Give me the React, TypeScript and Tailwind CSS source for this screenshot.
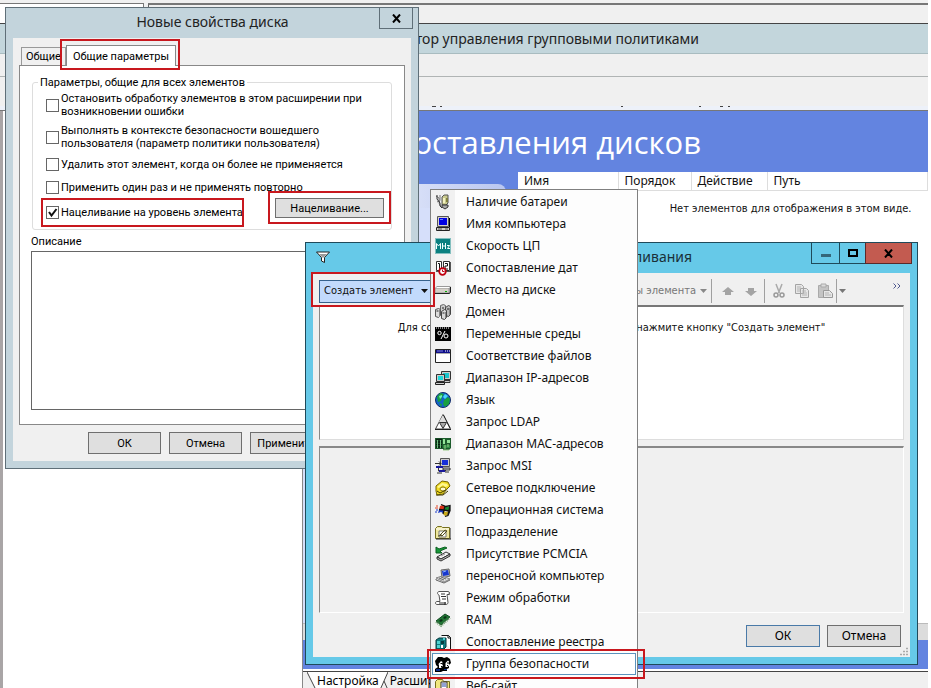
import type { ReactNode } from 'react';

const ui = "font-['Noto_Sans','Open_Sans',sans-serif]";
const compact = "text-[11px] font-['DejaVu_Sans_Condensed','Noto_Sans',sans-serif]";
const tahoma = "font-[Roboto,'Noto_Sans',sans-serif]";

function Icon({ children, size = 16 }: { children: ReactNode; size?: number }) {
  return (
    <svg width={size} height={size} viewBox="0 0 16 16" fill="none" aria-hidden="true" className="shrink-0">
      {children}
    </svg>
  );
}

const Battery = () => (
  <Icon>
    <path d="M1 2l3 2v3L2 8M5 1v5l-1 3 2 4" stroke="#777" />
    <path d="M2 1v4l3 4v3l2 2" stroke="#333" />
    <path d="M7 3l2-2h4v8l-2 2H7z" fill="#c9c98d" stroke="#555" />
    <path d="M8 4h2v5H8z" fill="#f4f4c0" />
    <path d="M7 11h6v2l-3 2-3-2z" fill="#aaa" stroke="#333" />
    <path d="M11 4h2v4h-2z" fill="#808040" />
  </Icon>
);
const Computer = () => (
  <Icon>
    <path d="M2.500 .5h11v10h-11z" fill="#d4d0c8" stroke="#555" />
    <path d="M4 2h8v7H4z" fill="#0000e0" />
    <path d="M5 3h3v1H5z" fill="#6080ff" />
    <path d="M1.500 11.500h13v3h-13z" fill="#d4d0c8" stroke="#222" />
    <path d="M3 13h4M10 13h3" stroke="#555" />
    <path d="M14.500 2v9" stroke="#000" />
  </Icon>
);
const Mhz = () => (
  <Icon>
    <rect width="16" height="16" fill="#0b8080" />
    <rect x=".5" y=".5" width="15" height="15" stroke="#fff" strokeDasharray="1 1" />
    <path d="M1.500 11V5.500l2 2.500 2-2.500V11M7.500 5v6M10.500 5v6M7.500 8h3M12 7.500h2.500l-2 3h2.500" stroke="#f4ffff" />
  </Icon>
);
const Dates = () => (
  <Icon>
    <path d="M1.500 1.500h5v9h-5zM8.500 1.500h6v9h-6z" fill="#fff" stroke="#333" />
    <path d="M3 3.500h1.500V9M10 3.500h2.500v2.500h-2.500v3h3" stroke="#111" />
    <path d="M1 11.500h14M15.500 2v10" stroke="#555" />
    <circle cx="7.500" cy="11.500" r="3.300" fill="#fff" stroke="#c00010" strokeWidth="1.800" />
    <path d="M7.500 9.500v2h2M4 8l2 1M11 8l-2 1" stroke="#c00010" />
  </Icon>
);
const Disk = () => (
  <Icon>
    <path d="M0 6l2-2h13l1 1v5l-2 2H1l-1-1z" fill="#999" />
    <path d="M1 6l1-1h13l-1 1z" fill="#fff" />
    <path d="M.5 6.500h13v4H.5z" fill="#d4d0c8" />
    <path d="M0 11.500h14.500l1-1.500V5" stroke="#222" />
    <path d="M10 9h2v1h-2z" fill="#0a0" />
  </Icon>
);
const Domain = () => (
  <Icon>
    <path d="M5.500 1.500l3-1 2 1v7l-3 1-2-1z" fill="#ccc" stroke="#666" />
    <path d="M10.500 3.500l3-2 2 1v8l-2 2-3-1z" fill="#bbb" stroke="#444" />
    <path d="M.5 5.500l3-1 2 1v6l-2 2-3-1z" fill="#ddd" stroke="#555" />
    <path d="M6.500 7.500l3-2 2 1v7l-2 2-3-1z" fill="#d8d8d8" stroke="#444" />
    <path d="M1.500 7h2M7.500 9h2M12 5h2M7 4h2" stroke="#222" />
    <path d="M4.500 6v7M10.500 8v6M14.500 4v7" stroke="#888" />
  </Icon>
);
const Env = () => (
  <Icon>
    <path d="M0 1h16v14H0z" fill="#000" />
    <path d="M1 2h14" stroke="#fff" strokeDasharray="1 1" />
    <circle cx="4.500" cy="7" r="1.700" stroke="#fff" />
    <circle cx="11" cy="10" r="2" stroke="#fff" />
    <path d="M10 5l-4 8" stroke="#fff" />
  </Icon>
);
const FileMatch = () => (
  <Icon>
    <path d="M.5 1.500h15v13H.5z" fill="#fff" stroke="#222" />
    <path d="M1 2h14v3H1z" fill="#10108a" />
    <path d="M2 3h6" stroke="#8080e0" />
    <path d="M10 3h1M12 3h1M14 3h1" stroke="#fff" />
    <path d="M1 5.500h14" stroke="#aaa" />
  </Icon>
);
const IpRange = () => (
  <Icon>
    <path d="M6.500 1.500h9v8h-9z" fill="#ccc" stroke="#333" />
    <path d="M8 3h6v5H8z" fill="#18c5cc" />
    <path d="M9 10.500h6v2H9z" fill="#ccc" stroke="#333" />
    <path d="M1.500 4.500h8v7h-8z" fill="#ccc" stroke="#333" />
    <path d="M3 6h5v4H3z" fill="#20d8dc" />
    <path d="M.5 12.500h9v2h-9z" fill="#ccc" stroke="#222" />
  </Icon>
);
const Globe = () => (
  <Icon>
    <circle cx="8" cy="8" r="7.500" fill="#1264c8" stroke="#102a68" />
    <path d="M2 5l3-4 4 1-2 3-1 4-3 1zM9 8l4-3 2 2-1 5-4 3-2-3zM4 11l3 1-1 3z" fill="#18a040" />
    <path d="M4 4l3-1v2L5 7z" fill="#70f0b0" />
    <path d="M8 5l2-3 3 2-3 3z" fill="#48d8f8" />
  </Icon>
);
const Ldap = () => (
  <Icon>
    <path d="M8 .5L15.500 15H.5z" fill="#fff" stroke="#444" />
    <path d="M8 1l4 7H4z" fill="#ddd" />
    <path d="M4.500 8.500h7L8 14.500z" fill="#aaa" stroke="#333" />
    <path d="M0 15.500h16M8.500 1L15 14" stroke="#222" />
  </Icon>
);
const MacRange = () => (
  <Icon>
    <path d="M0 2h16v10l-2 2H8v-1H0z" fill="#1c5b2c" />
    <path d="M1 3.500h6M1 6h6M1 8.500h6M1 11h6" stroke="#081f10" strokeWidth="1.500" />
    <path d="M2 4h1v8H2zM5 4h1v8H5z" fill="#6fc080" />
    <path d="M8 3h2v5H8zM12 4h3v3h-3z" fill="#94e498" />
    <path d="M8 9h7v3H8z" fill="#2f8b43" />
    <path d="M8 14h6M10 9v4M13 8v3" stroke="#9c8" />
  </Icon>
);
const Msi = () => (
  <Icon>
    <path d="M5.500 .5h9v8h-9z" fill="#ccc" stroke="#555" />
    <path d="M7 2h6v5H7z" fill="#1830d8" />
    <path d="M0 5.500h6l-2-2M6 5.500l-2 2" stroke="#333" />
    <path d="M1 8h7v2H1z" fill="#18189c" />
    <path d="M8 10h7v2H8z" fill="#ccc" stroke="#333" />
    <path d="M3.500 10v3h7v-1M2 15h5M10 14h4" stroke="#333" />
    <path d="M4 12h6v2H4z" fill="#18189c" />
  </Icon>
);
const NetLink = () => (
  <Icon>
    <path d="M1 6l6-5 6 1 2 4-3 3-4 5-6 1-1-4z" fill="#f2dc24" stroke="#736400" />
    <path d="M2 7l5-4 5 1 1 2-3 1-2-2-4 3z" fill="#fff890" />
    <ellipse cx="8" cy="9" rx="3" ry="2" fill="#fffbd0" stroke="#8c7a00" />
    <path d="M2 11l3 2 6-3M1 15h7l5-4" stroke="#443c00" />
  </Icon>
);
const OsFlag = () => (
  <Icon>
    <path d="M5 4l3-1 2 1-1 4-2-1-3 1z" fill="#d83018" />
    <path d="M10 4l2 1 3-1-1 4-3 1-2-1z" fill="#188830" />
    <path d="M4 8l3-1 2 1-1 3-2-1-3 1z" fill="#1838c8" />
    <path d="M9 9l2 1 3-1-1 4-3 1-2-2z" fill="#c8a818" />
    <path d="M6 2.500l5 2 4-1v5l-2 5-3 1M10 4L8 12M4 7.500l5 .5 5 1M15 4l-2 9" stroke="#111" strokeWidth="1.300" />
    <path d="M1 4h2M0 6h3" stroke="#e04828" />
    <path d="M1 8h2M0 10h2" stroke="#1838c8" />
  </Icon>
);
const OrgUnit = () => (
  <Icon>
    <path d="M.5 4.500l2-2h4l1 1h7v11H.5z" fill="#eee79d" stroke="#777020" />
    <path d="M1 5h13" stroke="#fff" />
    <path d="M4 7h7v6H4z" fill="#fffff0" stroke="#777" />
    <path d="M5 11l5-5 2 1-5 5zM3 12l4-1" stroke="#555020" />
    <path d="M1 15h15V4" stroke="#222" />
  </Icon>
);
const Pcmcia = () => (
  <Icon>
    <path d="M1 1v6h6L5 5l7-3-2-1-6 2z" fill="#189838" stroke="#0b5f20" />
    <path d="M2 11l9-5 4 2-9 5z" fill="#f4f4f4" stroke="#333" />
    <path d="M2 11v2l4 2 9-5V8l-9 5z" fill="#bbb" stroke="#333" />
    <path d="M6 10l4-2" stroke="#999" />
  </Icon>
);
const Laptop = () => (
  <Icon>
    <path d="M6 2l8-1 1 7-8 2z" fill="#bbb" stroke="#666" />
    <path d="M7 3l6-1 1 5-6 1z" fill="#1838d0" />
    <path d="M8 4l3-1" stroke="#80b0ff" />
    <path d="M1 10l6-2 8 3-6 3z" fill="#ddd" stroke="#888" />
    <path d="M4 10l5 2M6 9l5 2M1 11v1l8 3 6-3" stroke="#666" />
  </Icon>
);
const Scroll = () => (
  <Icon>
    <path d="M4 1.500h9c2 0 2 3 0 3h-1l1 8c0 2-2 2-3 2H2c-2 0-2-3 0-3h3L4 5C2 4 2 2 4 1.500z" fill="#fff" stroke="#555" />
    <path d="M6 4h4M6 6.500h5M7 9h4M4 13h7" stroke="#333" />
    <path d="M10 12v3M14 4v1" stroke="#222" />
  </Icon>
);
const Ram = () => (
  <Icon>
    <path d="M1 9l9-7 5 3-9 8z" fill="#207434" stroke="#104820" />
    <path d="M4 9l2-2 2 1-2 2zM8 6l2-2 2 1-2 2z" fill="#0b3016" />
    <path d="M1 10l5 4 9-8" stroke="#70a070" strokeDasharray="1 1" strokeWidth="2" />
  </Icon>
);
const Registry = () => (
  <Icon>
    <path d="M6.500 1.500h7l2 2v12" fill="#fff" stroke="#111" />
    <path d="M13 1v3h3" stroke="#111" />
    <path d="M1 6l3-2h7v9l-2 2H1z" fill="#127c80" stroke="#063c40" />
    <path d="M2 7h3v3H2zM2 11h3v3H2zM8 4h2v2H8z" fill="#4ed0d0" />
    <path d="M6 7h3v3H6z" fill="#083c40" />
    <path d="M6 11h2v3H6z" fill="#fff" />
  </Icon>
);
const Group = () => (
  <Icon>
    <path d="M0 5l3-4 4 0 2 1 3-1 3 2 1 4-2 2v3l-2 1v2H8l-2 1H0v-3l3-2-2-2z" fill="#000" />
    <path d="M3.500 8L6 5l1.500 1-.5 2 1 1.500-2 2.500H4V9.500zM10.500 7L13 4.500l1 1-.5 2 1 1.500-2 2h-2V9z" fill="#fff" />
    <path d="M5.500 7.500h1.500M12 7h1.500M6 10.500h1M12 9.500h1" stroke="#000" />
    <path d="M1 13h4v2H1zM9 13h3v1H9z" fill="#0c2c88" />
  </Icon>
);
const WebSite = () => (
  <Icon>
    <path d="M.5 3.500l2-2h5l1 2h6v11H.5z" fill="#f1e87e" stroke="#777020" />
    <path d="M6 4h6v9H6z" fill="#fff" stroke="#333" />
    <path d="M7 6h4M7 8h4" stroke="#24a" />
  </Icon>
);

const menuItems: { label: string; icon: ReactNode; selected?: boolean }[] = [
  { label: 'Наличие батареи', icon: <Battery /> },
  { label: 'Имя компьютера', icon: <Computer /> },
  { label: 'Скорость ЦП', icon: <Mhz /> },
  { label: 'Сопоставление дат', icon: <Dates /> },
  { label: 'Место на диске', icon: <Disk /> },
  { label: 'Домен', icon: <Domain /> },
  { label: 'Переменные среды', icon: <Env /> },
  { label: 'Соответствие файлов', icon: <FileMatch /> },
  { label: 'Диапазон IP-адресов', icon: <IpRange /> },
  { label: 'Язык', icon: <Globe /> },
  { label: 'Запрос LDAP', icon: <Ldap /> },
  { label: 'Диапазон MAC-адресов', icon: <MacRange /> },
  { label: 'Запрос MSI', icon: <Msi /> },
  { label: 'Сетевое подключение', icon: <NetLink /> },
  { label: 'Операционная система', icon: <OsFlag /> },
  { label: 'Подразделение', icon: <OrgUnit /> },
  { label: 'Присутствие PCMCIA', icon: <Pcmcia /> },
  { label: 'переносной компьютер', icon: <Laptop /> },
  { label: 'Режим обработки', icon: <Scroll /> },
  { label: 'RAM', icon: <Ram /> },
  { label: 'Сопоставление реестра', icon: <Registry /> },
  { label: 'Группа безопасности', icon: <Group />, selected: true },
  { label: 'Веб-сайт', icon: <WebSite /> },
];

function Background() {
  return (
    <div className="flex h-full flex-col pr-[3px]">
      <div className="h-[3px] shrink-0 bg-[#f0f0f0]" />
      <div className="flex h-5 shrink-0 gap-1 bg-[#f0f0f0]">
        <div className="w-36 border-t border-r border-[#777] bg-white" />
        <div className="flex-1 border-t-2 border-l border-t-[#777] border-l-[#666]" />
      </div>
      <header className="flex h-[31px] shrink-0 items-center justify-center border-t border-b border-t-[#444] border-b-[#a9bcc0] bg-[#c3d6dc] pl-[147px]">
        <h1 className="text-[14px] leading-5 whitespace-nowrap text-[#222]">Редактор управления групповыми политиками</h1>
      </header>
      <div className="h-[23px] shrink-0 border-b border-[#b0b4b4] bg-[#f0f0f0]" />
      <div className="flex h-[34px] shrink-0 flex-col justify-end border-b border-[#777] bg-[#f0f0f0]">
        <svg height="4" fill="#444" aria-hidden="true" className="w-full bg-[#edf1f9]">
          <path d="M432 0h4v1h-4zM440 0h2v1h-2zM621 0h2v1h-2zM699 0h2v1h-2zM720 0h3v1h-3zM728 0h2v1h-2z" />
        </svg>
      </div>
      <div className="flex min-h-0 flex-1">
        <div className="w-[3px] bg-[#a9a5a6]" />
        <div className="w-[299px] bg-white" />
        <main className="flex min-w-0 flex-1 flex-col border-l border-[#888] bg-[#6384e0]">
          <h2 className="flex h-[61px] shrink-0 items-center pl-[53px] font-['Open_Sans','Noto_Sans',sans-serif] text-[31px] leading-9 whitespace-nowrap text-white">
            Сопоставления дисков
          </h2>
          <div className="flex min-h-0 flex-1">
            <div className="flex w-[215px] shrink-0 flex-col pt-3 pr-3">
              <div className="h-6 shrink-0 rounded-tr-lg bg-linear-to-r from-white to-[#b9c6f0]" />
              <div className="flex-1 bg-[#d6dffa]" />
            </div>
            <div className="min-w-0 flex-1 bg-white">
              <table className="w-full table-fixed border-collapse text-[12px] leading-[18px] text-[#111]">
                <thead>
                  <tr className="border-b border-[#ddd] text-left">
                    <th scope="col" className="w-[100px] border-r border-[#ddd] pl-[6px] font-normal">Имя</th>
                    <th scope="col" className="w-[73px] border-r border-[#ddd] pl-[6px] font-normal">Порядок</th>
                    <th scope="col" className="w-[76px] border-r border-[#ddd] pl-[6px] font-normal">Действие</th>
                    <th scope="col" className="border-r border-[#ddd] pl-[6px] font-normal">Путь</th>
                  </tr>
                </thead>
                <tbody>
                  <tr>
                    <td colSpan={4} className={`pt-[9px] pr-4 text-right whitespace-nowrap ${compact}`}>
                      Нет элементов для отображения в этом виде.
                    </td>
                  </tr>
                </tbody>
              </table>
            </div>
          </div>
          <div className="h-[17px] shrink-0 border-t border-[#bbb] bg-[#dcdcdc]" />
          <div className="h-[31px] shrink-0 border-b-2 border-white" />
          <nav className="flex h-[17px] shrink-0 items-start overflow-hidden border-t border-[#444] bg-[#f0f0f0] text-[12px] leading-[18px] whitespace-nowrap">
            <svg width="10" height="18" viewBox="0 0 10 18" fill="#fff" stroke="#444" aria-hidden="true" className="ml-1 shrink-0">
              <path d="M0 0l9 18h3V0" />
            </svg>
            <button type="button" className="bg-white">Настройка</button>
            <svg width="9" height="18" viewBox="0 0 9 18" stroke="#444" aria-hidden="true" className="shrink-0">
              <path d="M0 0h9L1 18H0z" fill="#fff" stroke="none" />
              <path d="M9 0L1 18M5 9l4 9" fill="none" />
            </svg>
            <button type="button" className="pl-[2px]">Расширенный</button>
          </nav>
        </main>
      </div>
    </div>
  );
}

function Check({ id, label, checked, top }: { id: string; label: ReactNode; checked?: boolean; top: string }) {
  return (
    <div className={`flex items-center gap-[2px] ${top}`}>
      <span className="grid shrink-0">
        <input
          id={id}
          type="checkbox"
          defaultChecked={checked}
          className="peer col-start-1 row-start-1 size-[13px] appearance-none border border-[#666] bg-white"
        />
        <svg
          viewBox="0 0 13 13"
          fill="none"
          stroke="#111"
          strokeWidth="2"
          aria-hidden="true"
          className="pointer-events-none invisible col-start-1 row-start-1 size-[13px] peer-checked:visible"
        >
          <path d="M3 6l2.500 3.500L10.500 3" />
        </svg>
      </span>
      <label htmlFor={id} className="whitespace-nowrap">{label}</label>
    </div>
  );
}

const btn = 'h-[22px] w-[73px] shrink-0 border border-[#6f6f6f] bg-[#dfdfdf]';

function PropertiesDialog() {
  return (
    <section
      aria-label="Новые свойства диска"
      className="absolute top-[7px] left-[5px] flex h-[462px] w-[414px] flex-col border border-[#5f6f78] bg-[#c3d4dc] px-[7px] pb-[7px]"
    >
      <header className="-mr-[2px] grid h-[30px] shrink-0 grid-cols-[33px_1fr_34px] items-start">
        <h2 className="col-start-2 text-center text-[14px] leading-7 text-[#222]">Новые свойства диска</h2>
        <button
          type="button"
          aria-label="Закрыть"
          className="flex h-[21px] items-center justify-center border border-t-0 border-[#5f6f78]"
        >
          <svg width="9" height="9" viewBox="0 0 9 9" stroke="#000" strokeWidth="2" aria-hidden="true">
            <path d="M1 .5l7 8M8 .5l-7 8" />
          </svg>
        </button>
      </header>
      <div className={`flex flex-1 flex-col bg-[#f0f0f0] px-[6px] pt-[7px] text-[11px] leading-[13px] text-black ${tahoma}`}>
        <div role="tablist" className="flex h-5 items-end pl-[2px]">
          <button type="button" role="tab" aria-selected="false" className="h-[18px] w-[45px] overflow-hidden border border-b-0 border-[#999] pl-1 text-left whitespace-nowrap">
            Общие
          </button>
          <button type="button" role="tab" aria-selected="true" className="relative -mb-px h-[21px] w-[110px] border border-b-0 border-[#888] bg-white whitespace-nowrap">
            Общие параметры
          </button>
        </div>
        <div className="flex h-[360px] flex-col border border-[#888] bg-white px-[11px] pt-[10px]">
          <fieldset className="ml-px h-[154px] w-[360px] rounded-[3px] border border-[#ddd] pl-[13px]">
            <legend className="-ml-2 px-[2px] whitespace-nowrap">Параметры, общие для всех элементов</legend>
            <Check id="stop" top="mt-[3px]" label={<>Остановить обработку элементов в этом расширении при<br />возникновении ошибки</>} />
            <Check id="context" top="mt-[6px]" label={<>Выполнять в контексте безопасности вошедшего<br />пользователя (параметр политики пользователя)</>} />
            <Check id="remove" top="mt-2" label="Удалить этот элемент, когда он более не применяется" />
            <Check id="once" top="mt-[10px]" label="Применить один раз и не применять повторно" />
            <div className="flex items-start justify-between pt-1 pr-[7px]">
              <Check id="target" checked top="mt-2" label="Нацеливание на уровень элемента" />
              <button type="button" className="h-5 w-[109px] border border-[#6f6f6f] bg-[#dfdfdf]">Нацеливание...</button>
            </div>
          </fieldset>
          <label htmlFor="description" className="mt-[5px]">Описание</label>
          <textarea id="description" className="mt-[3px] h-[159px] w-[360px] resize-none border border-[#666] bg-white" />
        </div>
        <div className="flex gap-2 pt-[7px] pl-[69px]">
          <button type="button" className={btn}>ОК</button>
          <button type="button" className={btn}>Отмена</button>
          <button type="button" className={btn}>Применить</button>
        </div>
      </div>
    </section>
  );
}

const Caret = ({ color }: { color: string }) => (
  <svg width="7" height="4" viewBox="0 0 7 4" fill={color} aria-hidden="true" className="shrink-0">
    <path d="M0 0h7L3.500 4z" />
  </svg>
);

const Separator = () => <span className="h-6 w-px shrink-0 bg-[#a0a0a0]" />;

function TargetingDialog() {
  return (
    <section
      aria-label="Редактор нацеливания"
      className="absolute top-[242px] left-[305px] flex h-[423px] w-[613px] flex-col border border-[#1f4a5a] bg-[#66c9e8] px-[7px] pb-[7px] text-[12px]"
    >
      <header className="-mr-[2px] flex h-[30px] shrink-0 items-start justify-between">
        <div className="flex w-[103px] pt-2 pl-[3px]">
          <svg width="14" height="13" viewBox="0 0 14 13" fill="#fff" stroke="#222" aria-hidden="true">
            <path d="M.5 1h13L8.500 6.500v5L5.500 10V6.500z" />
            <path d="M3 3h8L7 7z" fill="#999" stroke="none" />
          </svg>
        </div>
        <h2 className="text-[14px] leading-7 text-[#1a3038]">Редактор нацеливания</h2>
        <div className="flex h-[21px]">
          <button type="button" aria-label="Свернуть" className="flex w-[29px] items-center justify-center border border-t-0 border-[#1f4a5a]">
            <span className="mt-1 h-[3px] w-[10px] bg-[#35677a]" />
          </button>
          <button type="button" aria-label="Развернуть" className="flex w-[25px] items-center justify-center border-b border-[#1f4a5a]">
            <span className="h-2 w-[10px] border-2 border-black" />
          </button>
          <button type="button" aria-label="Закрыть" className="flex w-[47px] items-center justify-center border border-t-0 border-[#5a2a2a] bg-[#c35b50]">
            <svg width="9" height="9" viewBox="0 0 9 9" stroke="#000" strokeWidth="2" aria-hidden="true">
              <path d="M1 .5l7 8M8 .5l-7 8" />
            </svg>
          </button>
        </div>
      </header>
      <div className="flex min-h-0 flex-1 flex-col bg-[#f0f0f0] px-[6px]">
        <div role="toolbar" className={`flex h-8 shrink-0 items-center pt-1 text-[#777] ${compact}`}>
          <button type="button" className="flex h-[23px] w-[114px] items-center justify-between border border-[#36618c] bg-[#c2dafc] px-1 whitespace-nowrap text-[#111]">
            Создать элемент
            <Caret color="#111" />
          </button>
          <button type="button" className="ml-auto flex items-center gap-1 whitespace-nowrap">
            Параметры элемента
            <Caret color="#888" />
          </button>
          <span className="ml-1 flex items-center">
            <Separator />
            <button type="button" aria-label="Вверх" className="ml-[10px]">
              <svg width="12" height="9" viewBox="0 0 12 9" fill="#a4a4a4"><path d="M6 0l6 5H9v3H3V5H0z" /></svg>
            </button>
            <button type="button" aria-label="Вниз" className="mr-[7px] ml-[11px]">
              <svg width="12" height="9" viewBox="0 0 12 9" fill="#a4a4a4"><path d="M6 9l6-5H9V1H3v3H0z" /></svg>
            </button>
            <Separator />
            <button type="button" aria-label="Вырезать" className="ml-[6px]">
              <Icon>
                <path d="M5 1l3.500 9M11 1L7.500 10" stroke="#aaa" strokeWidth="1.500" />
                <circle cx="5" cy="12" r="2" stroke="#999" strokeWidth="1.500" />
                <circle cx="11" cy="12" r="2" stroke="#999" strokeWidth="1.500" />
              </Icon>
            </button>
            <button type="button" aria-label="Копировать" className="ml-[7px]">
              <Icon>
                <path d="M1.500 1.500h6l2 2v7h-8zM6.500 5.500h6l2 2v7h-8z" fill="#e6e6e6" stroke="#a4a4a4" />
                <path d="M3 4h4M3 6h3M3 8h3M8 8h4M8 10h5M8 12h5" stroke="#b4b4b4" />
              </Icon>
            </button>
            <button type="button" aria-label="Вставить" className="ml-[7px]">
              <Icon>
                <path d="M1.500 2.500h10v12h-10z" fill="#c4c4c4" stroke="#aaa" />
                <path d="M4 1h5v3H4z" fill="#ddd" stroke="#aaa" />
                <path d="M6.500 7.500h6l3 3v4h-9z" fill="#e6e6e6" stroke="#999" />
                <path d="M8 10h4M8 12h6" stroke="#b4b4b4" />
              </Icon>
            </button>
            <span className="ml-[3px] flex items-center gap-[2px]">
              <Separator />
              <button type="button" aria-label="Ещё"><Caret color="#777" /></button>
            </span>
          </span>
          <button type="button" aria-label="Другие команды" className="mr-[3px] mb-[10px] ml-[47px]">
            <svg width="8" height="6" viewBox="0 0 8 6" fill="none" stroke="#505a90"><path d="M.5 .5L3 3 .5 5.500M4.500 .5L7 3 4.500 5.500" /></svg>
          </button>
        </div>
        <div className={`h-[135px] shrink-0 border border-t-2 border-[#ddd] border-t-[#777] border-l-[#888] bg-white pt-[13px] text-center leading-4 whitespace-nowrap text-[#111] ${compact}`}>
          Для создания нового элемента нацеливания нажмите кнопку &quot;Создать элемент&quot;
        </div>
        <div className="mt-[6px] h-[167px] shrink-0 border border-t-2 border-white border-t-[#888] border-l-[#888]" />
        <div className="flex justify-end gap-[7px] pt-3 pr-[3px]">
          <button type="button" className="h-[22px] w-[74px] border border-[#4a7aa8] bg-[#dfdfdf]">ОК</button>
          <button type="button" className="h-[22px] w-[74px] border border-[#6f6f6f] bg-[#dfdfdf]">Отмена</button>
        </div>
        <svg width="9" height="9" viewBox="0 0 9 9" stroke="#aaa" aria-hidden="true" className="-mr-1 self-end">
          <path d="M7 1.500h2M4 4.500h2M7 4.500h2M1 7.500h2M4 7.500h2M7 7.500h2" strokeWidth="1.500" />
        </svg>
      </div>
    </section>
  );
}

function ElementMenu() {
  return (
    <ul
      role="menu"
      className="absolute top-[189px] left-[430px] w-[208px] border border-[#808080] bg-linear-to-r from-[#f1f1f1] from-[24px] to-[#fdfdfd] to-[24px] p-px text-[12px] text-[#111]"
    >
      {menuItems.map((item) => (
        <li key={item.label} role="none">
          <button
            type="button"
            role="menuitem"
            className={
              item.selected
                ? 'flex h-[22px] w-full items-center gap-[15px] border border-[#5b93bd] bg-white pl-[2px] text-left'
                : 'flex h-[22px] w-full items-center gap-[15px] border border-transparent pl-[2px] text-left'
            }
          >
            {item.icon}
            {item.label}
          </button>
        </li>
      ))}
    </ul>
  );
}

function Highlights() {
  const frame = 'pointer-events-none absolute border-2 border-[#c8181e]';
  return (
    <>
      <div className={`${frame} top-[39px] left-[60px] h-[31px] w-[120px]`} />
      <div className={`${frame} top-[198px] left-[41px] h-[29px] w-[203px]`} />
      <div className={`${frame} top-[191px] left-[268px] h-[33px] w-[123px]`} />
      <div className={`${frame} top-[272px] left-[311px] h-[35px] w-[124px]`} />
      <div className={`${frame} top-[649px] left-[427px] h-[30px] w-[218px]`} />
    </>
  );
}

export default function App() {
  return (
    <div className={`relative h-screen w-full overflow-hidden bg-white ${ui}`}>
      <Background />
      <PropertiesDialog />
      <TargetingDialog />
      <ElementMenu />
      <Highlights />
    </div>
  );
}
